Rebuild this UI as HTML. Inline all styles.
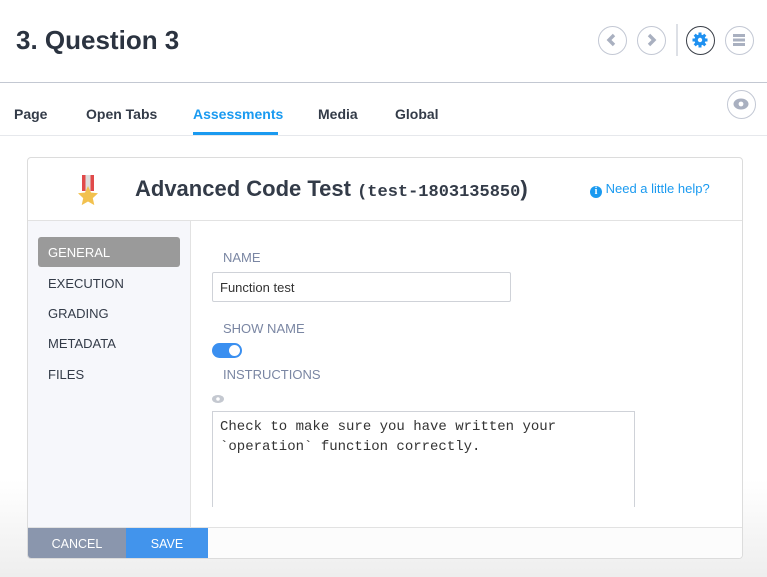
<!DOCTYPE html>
<html><head><style>
*{box-sizing:border-box;margin:0;padding:0}
body{width:767px;height:577px;overflow:hidden;font-family:"Liberation Sans",Arial,sans-serif;background:linear-gradient(#fff 0,#fff 480px,#eeeeee 577px);position:relative;color:#333b48}
.abs{position:absolute}
.circ{position:absolute;width:29px;height:29px;border:1.5px solid #c3c8d4;border-radius:50%;background:#fff}
.tab{position:absolute;top:106px;font-size:14px;font-weight:bold;color:#333b48}
.lbl{position:absolute;left:223px;font-size:12.5px;color:#7a86a3}
.side{position:absolute;left:48px;font-size:13px;color:#333b48}
</style></head><body>
<div class="abs" style="left:0;top:0;width:767px;height:83px;background:#fff;border-bottom:1.5px solid #c3c8d2"></div>
<div class="abs" style="left:16px;top:25px;font-size:26px;font-weight:bold;color:#2b3340">3. Question 3</div>
<div class="circ" style="left:598px;top:26px"><svg width="26" height="26" viewBox="0 0 26 26"><path d="M15 8l-5 5 5 5" fill="none" stroke="#a9b0c0" stroke-width="3.4"/></svg></div>
<div class="circ" style="left:637px;top:26px"><svg width="26" height="26" viewBox="0 0 26 26"><path d="M11 8l5 5-5 5" fill="none" stroke="#a9b0c0" stroke-width="3.4"/></svg></div>
<div class="abs" style="left:676px;top:24px;width:1.5px;height:32px;background:#dde0e6"></div>
<div class="circ" style="left:686px;top:26px;border-color:#3a3f48"><svg width="26" height="26" viewBox="0 0 26 26"><g fill="#1e90f0"><circle cx="13" cy="13" r="5.5"/><g stroke="#1e90f0" stroke-width="3"><path d="M13 5.5v15M5.5 13h15M7.7 7.7l10.6 10.6M18.3 7.7L7.7 18.3"/></g></g><circle cx="13" cy="13" r="2.2" fill="#fff"/></svg></div>
<div class="circ" style="left:725px;top:26px"><svg width="26" height="26" viewBox="0 0 26 26"><path d="M7 8.5h12M7 13h12M7 17.5h12" stroke="#a9b0c0" stroke-width="3"/></svg></div>
<div class="tab" style="left:14px">Page</div>
<div class="tab" style="left:86px">Open Tabs</div>
<div class="tab" style="left:193px;color:#1a9af0">Assessments</div>
<div class="abs" style="left:193px;top:132px;width:85px;height:3px;background:#1a9af0"></div>
<div class="tab" style="left:318px">Media</div>
<div class="tab" style="left:395px">Global</div>
<div class="abs" style="left:0;top:135px;width:767px;height:1px;background:#e6e8ec"></div>
<div class="circ" style="left:727px;top:90px"><svg width="26" height="26" viewBox="0 0 26 26"><ellipse cx="13" cy="13" rx="7.5" ry="5.5" fill="#a9b0c0"/><circle cx="13" cy="13" r="2.4" fill="#fff"/></svg></div>

<div class="abs" style="left:27px;top:157px;width:716px;height:402px;border:1px solid #dcdcdc;border-radius:4px;background:#fff;overflow:hidden">
 <div class="abs" style="left:0;top:0;width:716px;height:63px;border-bottom:1px solid #e2e2e2"></div>
 <div class="abs" style="left:0;top:63px;width:163px;height:307px;background:#f6f7fb;border-right:1px solid #e2e2e2"></div>
 <div class="abs" style="left:0;top:369px;width:716px;height:33px;background:#fcfcfc;border-top:1px solid #e2e2e2"></div>
 <div class="abs" style="left:0;top:370px;width:98px;height:32px;background:#8a96ad;color:#fff;font-size:12.5px;text-align:center;line-height:32px">CANCEL</div>
 <div class="abs" style="left:98px;top:370px;width:82px;height:32px;background:#4294ec;color:#fff;font-size:12.5px;text-align:center;line-height:32px">SAVE</div>
</div>
<svg class="abs" style="left:76px;top:174px" width="26" height="34" viewBox="0 0 26 34"><rect x="6" y="1" width="12" height="16" fill="#e14a4a"/><rect x="9.5" y="1" width="5" height="16" fill="#ddd"/><path d="M12 12l3 6.5 7 .8-5.2 4.8 1.5 7-6.3-3.6-6.3 3.6 1.5-7L2 19.3l7-.8z" fill="#f2c14e"/></svg>
<div class="abs" style="left:135px;top:176px;font-size:22px;font-weight:bold;color:#333b48">Advanced Code Test <span style="font-family:'Liberation Mono',monospace;font-size:17px">(test-1803135850</span>)</div>
<div class="abs" style="left:590px;top:181px;font-size:13px;color:#1a9af0"><span style="display:inline-block;width:12px;height:12px;border-radius:50%;background:#1a9af0;color:#fff;font-size:10px;font-weight:bold;text-align:center;line-height:12px;vertical-align:-1px;font-family:'Liberation Serif',serif">i</span> Need a little help?</div>

<div class="abs" style="left:38px;top:237px;width:142px;height:30px;background:#9a9a9a;border-radius:3px"></div>
<div class="side" style="left:48px;top:245px;color:#fff">GENERAL</div>
<div class="side" style="top:276px">EXECUTION</div>
<div class="side" style="top:306px">GRADING</div>
<div class="side" style="top:336px">METADATA</div>
<div class="side" style="top:367px">FILES</div>

<div class="lbl" style="top:250px;font-size:13px">NAME</div>
<div class="abs" style="left:212px;top:272px;width:299px;height:30px;border:1px solid #cfd2d8;border-radius:2px;font-size:13px;padding:7px 7px;color:#333">Function test</div>
<div class="lbl" style="top:321px;font-size:13px">SHOW NAME</div>
<div class="abs" style="left:212px;top:343px;width:30px;height:15px;border-radius:8px;background:#3a8ff0"><div style="position:absolute;right:2px;top:2px;width:11px;height:11px;border-radius:50%;background:#fff"></div></div>
<div class="lbl" style="top:367px;font-size:13px">INSTRUCTIONS</div>
<svg class="abs" style="left:211px;top:394px" width="14" height="10" viewBox="0 0 14 10"><ellipse cx="7" cy="5" rx="6" ry="4" fill="#c4c8d0"/><circle cx="7" cy="5" r="1.8" fill="#fff"/></svg>
<div class="abs" style="left:212px;top:411px;width:423px;height:96px;border:1px solid #cfd2d8;border-bottom:none;font-family:'Liberation Mono',monospace;font-size:14px;line-height:20px;padding:5px 7px;color:#333">Check to make sure you have written your<br>`operation` function correctly.</div>
</body></html>
